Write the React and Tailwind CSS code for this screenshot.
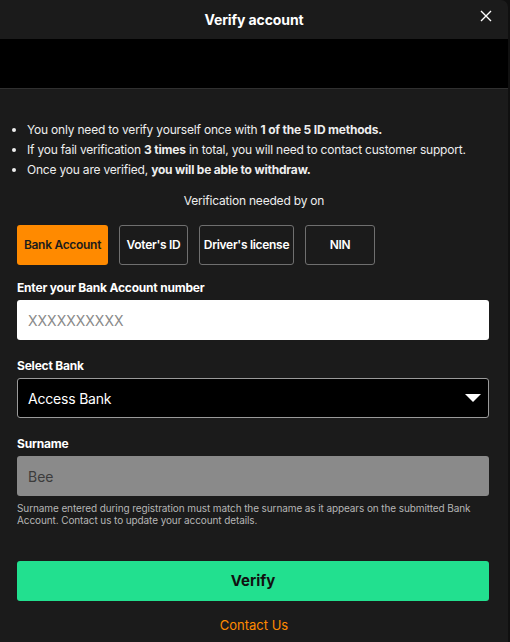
import { useState } from "react";

const METHODS = [
  { id: "bank", label: "Bank Account", w: "w-[91px]" },
  { id: "voter", label: "Voter's ID", w: "w-[69px]" },
  { id: "driver", label: "Driver's license", w: "w-[95px]" },
  { id: "nin", label: "NIN", w: "w-[70px]" },
];

const font = { fontFamily: "Inter, 'Noto Sans', sans-serif" };

function Label({ children }) {
  return <div className="text-[12px] font-bold text-white leading-none mb-[6px] tracking-[-0.2px]">{children}</div>;
}

export default function App() {
  const [method, setMethod] = useState("bank");
  const [account, setAccount] = useState("");

  return (
    <div className="min-h-screen bg-[#101010]" style={font}>
      <div className="w-[508px] min-h-[642px] bg-[#1b1b1b] rounded-tr-[7px] overflow-hidden">
        {/* header */}
        <div className="relative h-[39px] flex items-center justify-center">
          <h1 className="text-[14px] font-bold text-white tracking-[-0.1px]">Verify account</h1>
          <button className="absolute right-[15px] top-[9px] text-white">
            <svg width="14" height="14" viewBox="0 0 14 14" fill="none" stroke="currentColor" strokeWidth="1.4">
              <path d="M2 2l10 10M12 2L2 12" />
            </svg>
          </button>
        </div>
        <div className="h-[49px] bg-black" />
        <div className="h-px bg-[#303030]" />

        <div className="px-[17px] pt-[31px]">
          <ul className="text-[12px] text-[#eee] leading-[20px] pl-[10px] list-disc tracking-[-0.2px]">
            <li>
              You only need to verify yourself once with <b>1 of the 5 ID methods.</b>
            </li>
            <li>
              If you fail verification <b>3 times</b> in total, you will need to contact customer support.
            </li>
            <li>
              Once you are verified, <b>you will be able to withdraw.</b>
            </li>
          </ul>

          <p className="text-[12px] text-[#eee] text-center mt-[11px] leading-[20px] tracking-[-0.2px]">
            Verification needed by on
          </p>

          <div className="flex gap-[11px] mt-[14px]">
            {METHODS.map((m) => (
              <button
                key={m.id}
                onClick={() => setMethod(m.id)}
                className={`${m.w} h-[40px] rounded-[3px] text-[12px] font-semibold tracking-[-0.3px] ${
                  method === m.id
                    ? "bg-[#ff8a00] text-[#1b1b1b]"
                    : "border border-[#6f6f6f] text-white"
                }`}
              >
                {m.label}
              </button>
            ))}
          </div>

          <div className="mt-[17px]">
            <Label>Enter your Bank Account number</Label>
            <input
              value={account}
              onChange={(e) => setAccount(e.target.value)}
              placeholder="XXXXXXXXXX"
              className="w-[472px] h-[40px] rounded-[3px] bg-white px-[11px] text-[14px] text-black placeholder:text-[#8a8a8a] outline-none"
            />
          </div>

          <div className="mt-[20px]">
            <Label>Select Bank</Label>
            <div className="w-[472px] h-[40px] rounded-[3px] bg-black border border-[#9a9a9a] flex items-center justify-between pl-[10px] pr-[7px]">
              <span className="text-[14px] text-white tracking-[-0.2px]">Access Bank</span>
              <svg width="16" height="9" viewBox="0 0 16 9">
                <path d="M0 0h16L8 8z" fill="#fff" />
              </svg>
            </div>
          </div>

          <div className="mt-[20px]">
            <Label>Surname</Label>
            <div className="w-[472px] h-[40px] rounded-[3px] bg-[#8a8a8a] flex items-center px-[11px] text-[14px] text-[#3c3c3c]">
              Bee
            </div>
            <p className="text-[10px] text-[#b5b5b5] leading-[12px] mt-[6px] tracking-[-0.1px]">
              Surname entered during registration must match the surname as it appears on the submitted Bank Account. Contact us to update your account details.
            </p>
          </div>

          <button className="mt-[35px] w-[472px] h-[40px] rounded-[3px] bg-[#22e08f] text-[15px] font-bold text-[#111]">
            Verify
          </button>

          <div className="text-center mt-[11px]">
            <a className="text-[13px] text-[#ff8a00]">Contact Us</a>
          </div>
        </div>
      </div>
    </div>
  );
}
